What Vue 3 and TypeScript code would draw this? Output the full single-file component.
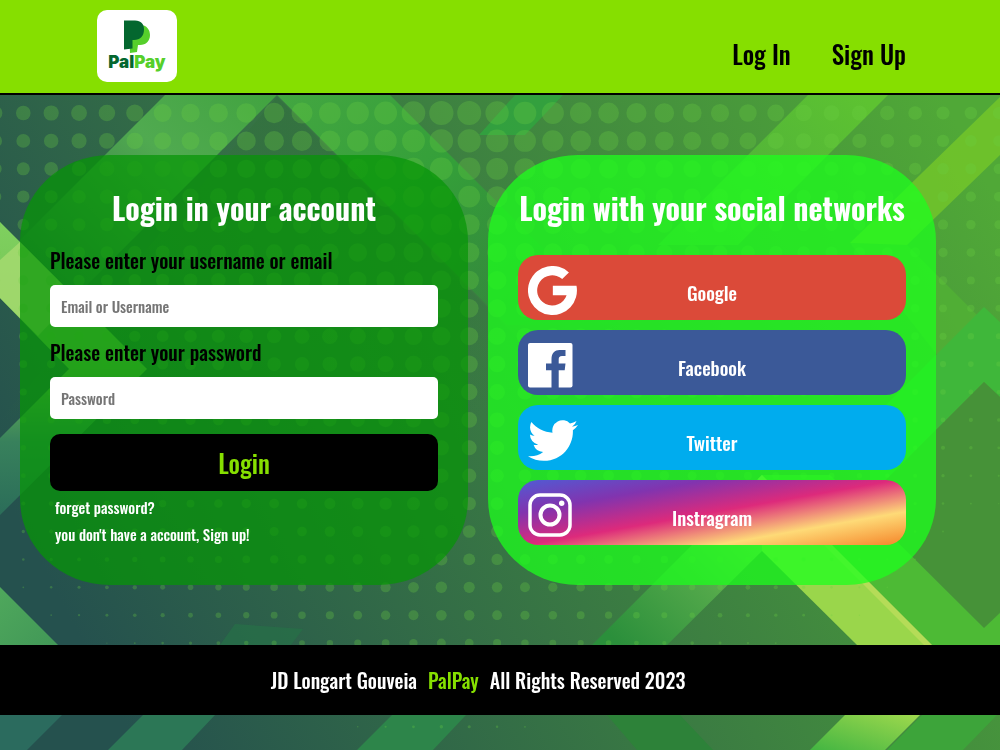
<script setup lang="ts">
interface Dot { x: number; y: number; r: number }

const dots: Dot[] = []
for (let row = 0; row < 24; row++) {
  for (let col = -1; col < 36; col++) {
    const x = 23.3 + col * 27.87
    const y = 113 + row * 27.9
    const r = 12.2 - Math.abs(x - 450) * 0.0115 - (y - 113) * 0.0135 - Math.max(0, y - 620) * 0.02
    if (r > 0.6) dots.push({ x, y, r })
  }
}

const networks = [
  { id: 'google', name: 'Google' },
  { id: 'facebook', name: 'Facebook' },
  { id: 'twitter', name: 'Twitter' },
  { id: 'instagram', name: 'Instragram' },
]
</script>

<template>
  <div class="page">
    <svg class="backdrop" viewBox="0 0 1000 750" preserveAspectRatio="xMidYMid slice" aria-hidden="true">
      <defs>
        <linearGradient id="base" gradientUnits="userSpaceOnUse" x1="60" y1="600" x2="960" y2="130">
          <stop offset="0" stop-color="#25514e" />
          <stop offset="0.5" stop-color="#3b7c42" />
          <stop offset="1" stop-color="#50a837" />
        </linearGradient>
        <linearGradient id="peakLeft" gradientUnits="userSpaceOnUse" x1="280" y1="95" x2="60" y2="315">
          <stop offset="0" stop-color="#41a33f" />
          <stop offset="0.4" stop-color="#50aa50" />
          <stop offset="1" stop-color="#50aa50" stop-opacity="0" />
        </linearGradient>
        <linearGradient id="peakRight" gradientUnits="userSpaceOnUse" x1="280" y1="95" x2="520" y2="335">
          <stop offset="0" stop-color="#43a641" />
          <stop offset="0.5" stop-color="#349f39" />
          <stop offset="1" stop-color="#2f9139" stop-opacity="0.4" />
        </linearGradient>
        <linearGradient id="shade" gradientUnits="userSpaceOnUse" x1="277" y1="97" x2="277" y2="420">
          <stop offset="0" stop-color="#33713f" stop-opacity="0.8" />
          <stop offset="1" stop-color="#33713f" stop-opacity="0" />
        </linearGradient>
        <linearGradient id="arrow" x1="0" y1="0" x2="0" y2="1">
          <stop offset="0" stop-color="#7fd05f" />
          <stop offset="0.5" stop-color="#70bd50" />
          <stop offset="0.75" stop-color="#38815c" />
          <stop offset="1" stop-color="#2b6d59" />
        </linearGradient>
        <linearGradient id="legLeft" gradientUnits="userSpaceOnUse" x1="762" y1="500" x2="620" y2="645">
          <stop offset="0" stop-color="#8bd052" />
          <stop offset="0.5" stop-color="#52a84a" />
          <stop offset="1" stop-color="#2b8f3b" />
        </linearGradient>
        <linearGradient id="slant" gradientUnits="userSpaceOnUse" x1="860" y1="95" x2="690" y2="265">
          <stop offset="0" stop-color="#5dc231" />
          <stop offset="1" stop-color="#4fb83c" stop-opacity="0.6" />
        </linearGradient>
        <linearGradient id="corner" x1="0" y1="0" x2="1" y2="1">
          <stop offset="0" stop-color="#4fa85c" />
          <stop offset="1" stop-color="#3c9155" />
        </linearGradient>
        <linearGradient id="lowRight" x1="1" y1="0" x2="0" y2="1">
          <stop offset="0" stop-color="#9fd94d" />
          <stop offset="1" stop-color="#42b542" />
        </linearGradient>
      </defs>
      <rect width="1000" height="750" fill="url(#base)" />
      <path d="M165 95H277L57 315H-55Z" fill="url(#peakLeft)" />
      <path d="M277 95H390L620 325H507Z" fill="url(#peakRight)" />
      <path d="M277 97L600 420H0Z" fill="url(#shade)" />
      <path d="M515 95H563L525 135H479Z" fill="#2fa63f" opacity=".8" />
      <path d="M0 222L147 369L0 515V438L69 369L0 298Z" fill="url(#arrow)" />
      <path d="M0 260L20 242L75 297L38 336L0 298Z" fill="#a8db70" opacity=".8" />
      <path d="M0 587L58 645L80 668H0Z" fill="url(#corner)" />
      <path d="M808 95H888L738 245H658Z" fill="url(#slant)" />
      <path d="M907 245L978 316L938 356L850 243Z" fill="#54b834" opacity=".6" />
      <path d="M1000 97V155L907 245L850 243Z" fill="#77ca28" opacity=".75" />
      <path d="M984 307L1000 322V397L984 382L870 496V421Z" fill="#3fb73a" />
      <path d="M984 382L1000 397V612L984 628L870 514V496Z" fill="#469238" />
      <path d="M762 475L592 645H667L762 551Z" fill="url(#legLeft)" />
      <path d="M762 475L932 645H857L762 551Z" fill="#9ad64b" />
      <path d="M830 475L984 628L1000 613V645H932L762 475Z" fill="#4dba35" />
      <path d="M762 475L932 645H924L758 479Z" fill="#b5dc58" />
      <path d="M235 624L303 629L291 645H220Z" fill="#277047" opacity=".7" />
      <path d="M0 715H62L27 750H0Z" fill="#2b6b5e" />
      <path d="M143 715H215L182 750H108Z" fill="#2c7756" />
      <path d="M392 715H466L433 750H357Z" fill="#2d854a" />
      <path d="M607 715H680L713 750H637Z" fill="#2d8239" />
      <path d="M845 715H920L885 750H810Z" fill="url(#lowRight)" />
      <path d="M922 715H997L963 750H887Z" fill="#3da43a" />
      <g fill="#6cd142" opacity=".28">
        <circle v-for="(d, i) in dots" :key="i" :cx="d.x" :cy="d.y" :r="d.r" />
      </g>
    </svg>

    <header class="bar">
      <a href="#" class="brand" aria-label="PalPay home">
        <svg viewBox="0 0 80 72" aria-hidden="true">
          <path d="M32 15H43C50 15 53 20 53 25C53 31 49 35 43 35H41L40 42L33 43Z" fill="#56cf2b" />
          <path d="M27 10.500H38C44 10.500 47 14 47 19.500C47 26 43 30 37 30H35.500V38.500L27 39.500Z" fill="#04672f" />
          <text x="40" y="58" text-anchor="middle"><tspan fill="#04672f">Pal</tspan><tspan fill="#56cf2b">Pay</tspan></text>
        </svg>
      </a>
      <nav class="menu">
        <a href="#login">Log In</a>
        <a href="#signup">Sign Up</a>
      </nav>
    </header>

    <main class="cards">
      <form id="login" class="card account" @submit.prevent>
        <h2>Login in your account</h2>
        <label for="user">Please enter your username or email</label>
        <input id="user" type="text" placeholder="Email or Username" />
        <label for="pass">Please enter your password</label>
        <input id="pass" type="password" placeholder="Password" />
        <button type="submit" class="submit">Login</button>
        <div class="links">
          <a href="#forgot">forget password?</a>
          <a href="#signup">you don't have a account, Sign up!</a>
        </div>
      </form>

      <section class="card social">
        <h2>Login with your social networks</h2>
        <div class="networks">
          <button v-for="n in networks" :key="n.id" type="button" :class="['network', n.id]">
            <svg v-if="n.id === 'google'" width="49" height="49" viewBox="53 47 146 146" aria-hidden="true">
              <path fill="#fff" d="M175 66A73 73 0 1 0 197.500 106H127V134H168A45 45 0 1 1 155 86Z" />
            </svg>
            <svg v-else-if="n.id === 'facebook'" width="45" height="45" viewBox="0 0 45 45" aria-hidden="true">
              <rect width="44.500" height="44.500" rx="2" fill="#fff" />
              <path fill="#3b5998" d="M23.500 45V27.200H18V20.500H23.500V16C23.500 10 27 7 31.500 7H37.500V13H34C31.500 13 30.700 14.200 30.700 16.500V20.500H37.500L36.700 27.200H30.700V45Z" />
            </svg>
            <svg v-else-if="n.id === 'twitter'" width="50" height="41" viewBox="0 2.200 24 19.600" aria-hidden="true">
              <path fill="#fff" d="M23.953 4.570a10 10 0 01-2.825.775 4.958 4.958 0 002.163-2.723c-.951.555-2.005.959-3.127 1.184a4.920 4.920 0 00-8.384 4.482C7.690 8.095 4.067 6.130 1.640 3.162a4.822 4.822 0 00-.666 2.475c0 1.710.870 3.213 2.188 4.096a4.904 4.904 0 01-2.228-.616v.060a4.923 4.923 0 003.946 4.827 4.996 4.996 0 01-2.212.085 4.936 4.936 0 004.604 3.417 9.867 9.867 0 01-6.102 2.105c-.390 0-.779-.023-1.170-.067a13.995 13.995 0 007.557 2.209c9.053 0 13.998-7.496 13.998-13.985 0-.210 0-.420-.015-.630A9.935 9.935 0 0024 4.590z" />
            </svg>
            <svg v-else width="44" height="44" viewBox="0 0 44 44" fill="none" stroke="#fff" aria-hidden="true">
              <rect x="2" y="2" width="40" height="40" rx="10" stroke-width="3.500" />
              <circle cx="22" cy="22" r="9.500" stroke-width="4" />
              <circle cx="33.700" cy="10.300" r="2.700" fill="#fff" stroke="none" />
            </svg>
            <span>{{ n.name }}</span>
          </button>
        </div>
      </section>
    </main>

    <footer class="footer">
      <span>JD Longart Gouveia</span>
      <a href="#">PalPay</a>
      <span>All Rights Reserved 2023</span>
    </footer>
  </div>
</template>

<style>
body {
  margin: 0;
}
</style>

<style scoped>
.page,
.page * {
  box-sizing: border-box;
}

.page {
  position: relative;
  min-height: 100vh;
  font-family: Oswald, "Liberation Sans Narrow", "Liberation Sans", sans-serif;
  font-weight: 500;
}

.backdrop {
  position: fixed;
  inset: 0;
  z-index: -1;
  width: 100%;
  height: 100%;
}

a {
  color: inherit;
  text-decoration: none;
}

.bar {
  display: flex;
  align-items: center;
  justify-content: space-between;
  padding: 10px 94px 11px 97px;
  background: #86df00;
  border-bottom: 2px solid #000;
}

.brand {
  width: 80px;
  height: 72px;
  overflow: hidden;
  background: #fff;
  border-radius: 10px;
}

.brand svg {
  display: block;
}

.brand text {
  font: 900 17px Inter, "Liberation Sans", sans-serif;
}

.menu {
  display: flex;
  gap: 41px;
  padding-top: 15px;
  font-size: 25px;
  line-height: 40px;
}

.cards {
  display: grid;
  grid-template-columns: 1fr 1fr;
  gap: 20px;
  padding: 60px 64px 60px 20px;
}

.card {
  padding: 28px 30px 40px;
  border-radius: 20%;
}

.account {
  padding-bottom: 30px;
  background: rgba(5, 149, 5, 0.72);
}

.social {
  background: rgba(30, 255, 30, 0.75);
}

h2 {
  margin: 0;
  color: #fff;
  font-size: 30px;
  font-weight: 700;
  line-height: 50px;
  text-align: center;
  white-space: nowrap;
}

label {
  display: block;
  margin: 10px 0;
  font-size: 20px;
  line-height: 30px;
}

h2 + label {
  margin-top: 12px;
}

input {
  display: block;
  width: 100%;
  height: 42px;
  padding: 0 11px;
  font: inherit;
  font-size: 15px;
  background: #fff;
  border: 0;
  border-radius: 5px;
}

input::placeholder {
  color: #757575;
  opacity: 1;
}

.submit {
  display: block;
  width: 100%;
  height: 57px;
  margin-top: 15px;
  padding: 0;
  color: #86df00;
  font: inherit;
  font-size: 25px;
  background: #000;
  border: 0;
  border-radius: 10px;
}

.links {
  display: flex;
  flex-direction: column;
  align-items: flex-start;
  padding: 3px 5px 0;
  color: #fff;
  font-size: 15px;
  line-height: 27px;
}

.networks {
  display: grid;
  gap: 10px;
  margin-top: 22px;
}

.network {
  display: grid;
  grid-template-columns: 1fr auto 1fr;
  align-items: center;
  height: 65px;
  padding: 5px 10px 0;
  color: #fff;
  font: inherit;
  font-size: 19px;
  border: 0;
  border-radius: 20px;
}

.network span {
  padding-top: 3px;
}

.google {
  background: #db4a39;
}

.facebook {
  background: #3b5998;
}

.twitter {
  background: #00acee;
}

.instagram {
  background: linear-gradient(170deg, #515bd4, #8134af, #dd2a7b, #feda77, #f58529);
}

.footer {
  display: flex;
  justify-content: center;
  gap: 11px;
  padding: 15px 44px 15px 0;
  color: #fff;
  font-size: 20px;
  line-height: 40px;
  background: #000;
}

.footer a {
  color: #86df00;
}
</style>
